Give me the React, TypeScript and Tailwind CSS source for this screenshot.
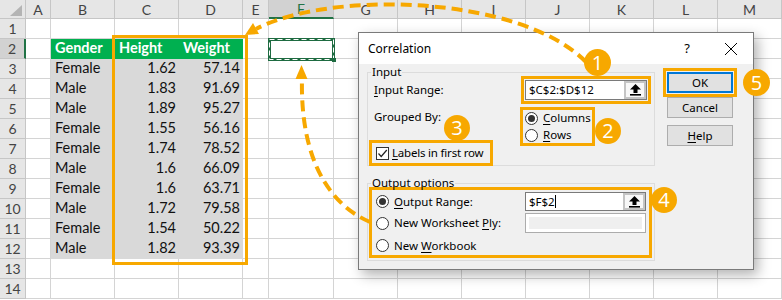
import React from "react"

const cols = ["A", "B", "C", "D", "E", "F", "G", "H", "I", "J", "K", "L", "M"]

const data: [string, string, string][] = [
  ["Female", "1.62", "57.14"],
  ["Male", "1.83", "91.69"],
  ["Male", "1.89", "95.27"],
  ["Female", "1.55", "56.16"],
  ["Female", "1.74", "78.52"],
  ["Male", "1.6", "66.09"],
  ["Female", "1.6", "63.71"],
  ["Male", "1.72", "79.58"],
  ["Female", "1.54", "50.22"],
  ["Male", "1.82", "93.39"],
]

function SheetCell({ row, col }: { row: number; col: number }) {
  // col: 0 = A ... 12 = M
  const inTable = col >= 1 && col <= 3
  if (row === 2 && inTable) {
    const text = ["Gender", "Height", "Weight"][col - 1]
    return (
      <div className="border-r border-b border-[#00b050] bg-[#00b050] text-white font-bold flex items-center pl-[4px] text-[14.5px] leading-none">
        {text}
      </div>
    )
  }
  if (row >= 3 && row <= 12 && inTable) {
    const v = data[row - 3][col - 1]
    if (col === 1) {
      return (
        <div className="border-r border-b border-[#d9d9d9] bg-[#d9d9d9] flex items-center pl-[4px] text-[14.5px] leading-none">
          {v}
        </div>
      )
    }
    return (
      <div className="border-r border-b border-[#d9d9d9] bg-[#d9d9d9] flex items-center justify-end pr-[2px] text-[14.5px] leading-none">
        {v}
      </div>
    )
  }
  return <div className="border-r border-b border-[#d4d4d4] bg-white" />
}

function Sheet() {
  return (
    <div className="grid grid-cols-[26px_25px_64px_64px_64px_26px_65px_64px_64px_64px_64px_64px_64px_64px] grid-rows-[19px_repeat(14,20px)] font-[Lato,sans-serif] text-[#111]">
      {/* corner */}
      <div className="bg-[#e6e6e6] border-r border-b border-[#c6c6c6] flex items-end justify-end pr-[3px] pb-[2px]">
        <svg width="12" height="11" viewBox="0 0 12 11">
          <polygon points="12,0 12,11 0,11" fill="#b4b4b4" />
        </svg>
      </div>
      {cols.map((c) =>
        c === "F" ? (
          <div key={c} className="bg-[#d2d2d2] border-r border-[#c6c6c6] border-b-2 border-b-[#217346] flex items-center justify-center text-[14px] text-[#217346]">
            {c}
          </div>
        ) : (
          <div key={c} className="bg-[#e6e6e6] border-r border-b border-[#c6c6c6] flex items-center justify-center text-[14px] text-[#444]">
            {c}
          </div>
        )
      )}
      {Array.from({ length: 14 }, (_, i) => i + 1).map((r) => (
        <React.Fragment key={r}>
          {r === 2 ? (
            <div className="bg-[#d2d2d2] border-b border-[#c6c6c6] border-r-2 border-r-[#217346] flex items-center justify-center text-[14px] text-[#444]">
              {r}
            </div>
          ) : (
            <div className="bg-[#e6e6e6] border-r border-b border-[#c6c6c6] flex items-center justify-center text-[14px] text-[#444]">
              {r}
            </div>
          )}
          {cols.map((_, ci) => (
            <SheetCell key={ci} row={r} col={ci} />
          ))}
        </React.Fragment>
      ))}
    </div>
  )
}

function Radio({ checked }: { checked?: boolean }) {
  return (
    <span className="w-[13px] h-[13px] rounded-full border border-[#333] bg-white flex items-center justify-center shrink-0">
      {checked && <span className="w-[7px] h-[7px] rounded-full bg-[#333]" />}
    </span>
  )
}

function RefButton() {
  return (
    <span className="w-[22px] h-full border-2 border-[#c4c4c4] bg-[#f7f7f7] flex items-center justify-center shrink-0">
      <svg width="11" height="12" viewBox="0 0 11 12">
        <polygon points="5.5,0 11,5.5 7.5,5.5 7.5,9 3.5,9 3.5,5.5 0,5.5" fill="#000" />
        <rect x="0" y="10" width="11" height="1.6" fill="#000" />
      </svg>
    </span>
  )
}

function Btn({ children, primary }: { children: React.ReactNode; primary?: boolean }) {
  return primary ? (
    <div className="w-[66px] h-[21px] bg-[#e1e1e1] border-2 border-[#0078d7] flex items-center justify-center">
      {children}
    </div>
  ) : (
    <div className="w-[66px] h-[21px] bg-[#e1e1e1] border border-[#adadad] flex items-center justify-center">
      {children}
    </div>
  )
}

function Dialog() {
  return (
    <div className="absolute left-[358px] top-[32px] w-[396px] h-[238px] border border-[#7a7a7a] bg-[#f0f0f0] shadow-[4px_5px_12px_rgba(0,0,0,0.3)] font-['Noto_Sans',sans-serif] text-[11.5px] text-black flex flex-col whitespace-nowrap">
      {/* title bar */}
      <div className="h-[31px] bg-white flex items-center pl-[9px] pr-[15px] shrink-0">
        <span className="flex-1 text-[12px]">Correlation</span>
        <span className="text-[13px] mr-[34px]">?</span>
        <svg width="14" height="14" viewBox="0 0 14 14">
          <path d="M1 1 L13 13 M13 1 L1 13" stroke="#000" strokeWidth="1" />
        </svg>
      </div>

      {/* body */}
      <div className="flex pl-[8px]">
        <div className="flex flex-col">
          {/* Input group */}
          <fieldset className="w-[288px] h-[102px] border border-[#dcdcdc]">
            <legend className="ml-[3px] px-[1px] leading-[16px]">Input</legend>
            <div className="flex items-center -mt-[4px]">
              <span className="flex-1 pl-[6px]">
                <span className="underline underline-offset-2">I</span>nput Range:
              </span>
              <div className="border-[3px] border-[#f7a800] p-px mr-[3px]">
                <div className="w-[122px] h-[20px] border border-[#7a7a7a] bg-white flex items-center">
                  <span className="flex-1 pl-[3px]">$C$2:$D$12</span>
                  <RefButton />
                </div>
              </div>
            </div>
            <div className="flex items-start mt-[3px]">
              <span className="flex-1 pl-[6px] pt-[1px]">Grouped By:</span>
              <div className="border-[3px] border-[#f7a800] w-[75px] h-[39px] mr-[59px] flex flex-col justify-center gap-[2px] pl-[2px]">
                <div className="flex items-center gap-[5px] h-[15px]">
                  <Radio checked />
                  <span>
                    <span className="underline underline-offset-2">C</span>olumns
                  </span>
                </div>
                <div className="flex items-center gap-[5px] h-[15px]">
                  <Radio />
                  <span>
                    <span className="underline underline-offset-2">R</span>ows
                  </span>
                </div>
              </div>
            </div>
            <div className="-mt-[6px] ml-px w-[124px] h-[26px] border-[3px] border-[#f7a800] flex items-center pl-[4px] gap-[3px]">
              <span className="w-[13px] h-[13px] border border-[#333] bg-white flex items-center justify-center shrink-0">
                <svg width="11" height="11" viewBox="0 0 11 11">
                  <path d="M1.5 5.5 L4.2 8.5 L9.8 2" stroke="#222" strokeWidth="1.2" fill="none" />
                </svg>
              </span>
              <span className="tracking-[-0.2px]">
                <span className="underline underline-offset-2">L</span>abels in first row
              </span>
            </div>
          </fieldset>

          {/* Output group */}
          <fieldset className="mt-[9px] w-[288px] h-[86px] border border-[#dcdcdc]">
            <legend className="ml-[3px] px-[1px] leading-[16px]">Output options</legend>
            <div className="-mt-[4px] ml-px w-[283px] h-[71px] border-[3px] border-[#f7a800] flex flex-col pl-[4px]">
              <div className="mt-[2px] h-[19px] flex items-center">
                <div className="w-[149px] flex items-center gap-[5px]">
                  <Radio checked />
                  <span>
                    <span className="underline underline-offset-2">O</span>utput Range:
                  </span>
                </div>
                <div className="w-[121px] h-[19px] border border-[#7a7a7a] bg-white flex items-center">
                  <span className="flex-1 pl-[3px]">
                    $F$2<span className="inline-block w-px h-[13px] bg-black align-middle -mt-[2px]" />
                  </span>
                  <RefButton />
                </div>
              </div>
              <div className="mt-[2px] h-[20px] flex items-center">
                <div className="w-[149px] flex items-center gap-[5px]">
                  <Radio />
                  <span>
                    New Worksheet <span className="underline underline-offset-2">P</span>ly:
                  </span>
                </div>
                <div className="w-[121px] h-[20px] border border-[#acacac] bg-white p-[3px]">
                  <div className="h-full bg-[#efefef]" />
                </div>
              </div>
              <div className="mt-[3px] h-[20px] flex items-center gap-[5px]">
                <Radio />
                <span>
                  New <span className="underline underline-offset-2">W</span>orkbook
                </span>
              </div>
            </div>
          </fieldset>
        </div>

        {/* buttons */}
        <div className="ml-[8px] mt-[4px] flex flex-col">
          <div className="border-[3px] border-[#f7a800] p-px">
            <Btn primary>OK</Btn>
          </div>
          <div className="ml-[4px]">
            <Btn>Cancel</Btn>
          </div>
          <div className="ml-[4px] mt-[7px]">
            <Btn>
              <span>
                <span className="underline underline-offset-2">H</span>elp
              </span>
            </Btn>
          </div>
        </div>
      </div>
    </div>
  )
}

function Badge({ n, className }: { n: number; className: string }) {
  return (
    <div className={className}>
      <span className="text-white text-[20px] leading-none font-['Open_Sans',sans-serif]">{n}</span>
    </div>
  )
}

export default function App() {
  return (
    <div className="relative w-[782px] h-[300px] overflow-hidden bg-white">
      <Sheet />

      {/* highlight around C2:D12 */}
      <div className="absolute left-[112px] top-[35px] w-[136px] h-[230px] border-[3px] border-[#f7a800]" />

      {/* copy marquee on F2 */}
      <svg className="absolute left-[267px] top-[37px]" width="70" height="26" viewBox="0 0 70 26">
        <rect x="2.5" y="2.5" width="64" height="20" fill="none" stroke="#1e6b41" strokeWidth="3" />
        <rect x="2.5" y="2.5" width="64" height="20" fill="none" stroke="#fff" strokeWidth="1" strokeDasharray="5 3" />
        <rect x="65" y="21" width="4" height="4" fill="#1e6b41" />
      </svg>

      <Dialog />

      {/* dashed arrows */}
      <svg className="absolute left-0 top-0 pointer-events-none" width="782" height="300" viewBox="0 0 782 300">
        <path d="M586 62 C520 -5, 330 -10, 256 29" fill="none" stroke="#f7a800" strokeWidth="4" strokeDasharray="11 6" />
        <polygon points="245,35 259,34 253,23" fill="#f7a800" />
        <path d="M370 222 C330 205, 300 160, 302 78" fill="none" stroke="#f7a800" strokeWidth="4" strokeDasharray="11 6" />
        <polygon points="301.5,65 295.5,79 307.5,79" fill="#f7a800" />
      </svg>

      <Badge n={1} className="absolute left-[584px] top-[49px] w-[27px] h-[27px] rounded-full bg-[#f7a800] flex items-center justify-center" />
      <Badge n={2} className="absolute left-[595px] top-[118px] w-[26px] h-[26px] rounded-full bg-[#f7a800] flex items-center justify-center" />
      <Badge n={3} className="absolute left-[444px] top-[115px] w-[26px] h-[26px] rounded-full bg-[#f7a800] flex items-center justify-center" />
      <Badge n={4} className="absolute left-[651px] top-[187px] w-[26px] h-[26px] rounded-full bg-[#f7a800] flex items-center justify-center" />
      <Badge n={5} className="absolute left-[743px] top-[69px] w-[27px] h-[27px] rounded-full bg-[#f7a800] flex items-center justify-center" />
    </div>
  )
}
